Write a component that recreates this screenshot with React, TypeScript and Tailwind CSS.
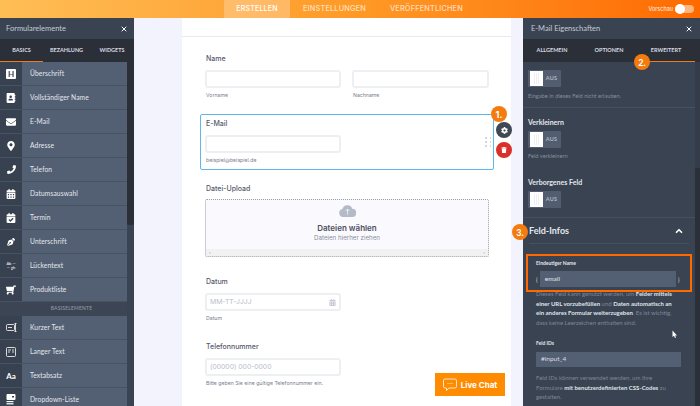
import { ChevronUp, X } from "lucide-react";
import {
  FaAddressBook,
  FaCalendarAlt,
  FaCalendarCheck,
  FaEnvelope,
  FaMapMarkerAlt,
  FaPenNib,
  FaPhoneAlt,
  FaShoppingCart,
  FaCog,
  FaTrash,
} from "react-icons/fa";

const H = () => (
  <span className="flex h-[10px] w-[10px] items-center justify-center rounded-[1px] bg-white text-[8px] leading-none font-bold text-[#39424f]">H</span>
);
const Blank = () => (
  <span className="flex flex-col items-center leading-none text-white">
    <span className="text-[4px]">Ab —</span>
    <span className="text-[4px]">— gh</span>
  </span>
);
const ShortText = () => (
  <svg width="11" height="9" viewBox="0 0 11 9" fill="none" stroke="white" strokeWidth="0.8">
    <rect x="0.5" y="1.5" width="8" height="6" rx="1" />
    <path d="M9.5 0.5v8M8.5 0.5h2M8.5 8.5h2" />
    <path d="M2 4.5h4" />
  </svg>
);
const LongText = () => (
  <svg width="10" height="10" viewBox="0 0 10 10" fill="none" stroke="white" strokeWidth="0.8">
    <rect x="0.5" y="0.5" width="9" height="9" rx="1" />
    <path d="M2 3h3M2 5h2M7 2v4" />
  </svg>
);
const Dropdown = () => (
  <svg width="10" height="11" viewBox="0 0 10 11" fill="white">
    <rect x="0.5" y="0" width="9" height="6" rx="1" />
    <rect x="0.5" y="7" width="7" height="1.2" />
    <rect x="0.5" y="9.2" width="7" height="1.2" />
    <rect x="6" y="2" width="2" height="1.5" fill="#39424f" />
  </svg>
);

const basics = [
  { name: "Überschrift", icon: <H /> },
  { name: "Vollständiger Name", icon: <FaAddressBook size={10} color="white" /> },
  { name: "E-Mail", icon: <FaEnvelope size={10} color="white" /> },
  { name: "Adresse", icon: <FaMapMarkerAlt size={10} color="white" /> },
  { name: "Telefon", icon: <FaPhoneAlt size={9} color="white" className="-scale-x-100" /> },
  { name: "Datumsauswahl", icon: <FaCalendarAlt size={10} color="white" /> },
  { name: "Termin", icon: <FaCalendarCheck size={10} color="white" /> },
  { name: "Unterschrift", icon: <FaPenNib size={8} color="white" /> },
  { name: "Lückentext", icon: <Blank /> },
  { name: "Produktliste", icon: <FaShoppingCart size={10} color="white" className="-scale-x-100" /> },
];
const base = [
  { name: "Kurzer Text", icon: <ShortText /> },
  { name: "Langer Text", icon: <LongText /> },
  { name: "Textabsatz", icon: <span className="text-[8px] font-bold text-white">Aa</span> },
  { name: "Dropdown-Liste", icon: <Dropdown /> },
];

function Row({ name, icon }: { name: string; icon: React.ReactNode }) {
  return (
    <div className="flex h-6 shrink-0 border-b border-[#475262]">
      <div className="flex w-[22px] shrink-0 items-center justify-center bg-[#38414f]">{icon}</div>
      <div className="flex flex-1 items-center bg-[#536073] pl-2 text-[6.7px] font-normal tracking-[0.1px] text-[#e3e7ee]">{name}</div>
    </div>
  );
}

function Badge({ n, className }: { n: string; className: string }) {
  return (
    <div className={`absolute z-10 flex h-4 w-4 items-center justify-center rounded-full bg-[#f47b0e] text-[9px] leading-none font-bold text-white ${className}`}>
      {n}
    </div>
  );
}

function Field({ label, sub, placeholder, icon }: { label: string; sub: string; placeholder?: string; icon?: boolean }) {
  return (
    <div className="flex flex-col">
      <div className="pl-px text-[7px] leading-[10px] font-medium text-[#57596a]">{label}</div>
      <div className="mt-[6px] flex h-[18px] w-[136px] items-center justify-between rounded-[3px] border-2 border-[#eeeff3] bg-white px-[3px] text-[6.8px] text-[#b9bdc9]">
        <span>{placeholder}</span>
        {icon && <FaCalendarAlt size={7} color="#c4c7d1" />}
      </div>
      <div className="mt-[4px] pl-px text-[5.2px] leading-[7px] text-[#7b7e8f]">{sub}</div>
    </div>
  );
}

function Toggle() {
  return (
    <div className="flex h-[17px] w-[33px] items-stretch rounded-[1px] bg-[#525e70] p-[1px] pl-[2px]">
      <div className="flex w-[13px] items-center justify-center gap-[1px] bg-white">
        <span className="h-[11px] w-px bg-[#eceef1]" />
        <span className="h-[11px] w-px bg-[#eceef1]" />
        <span className="h-[11px] w-px bg-[#eceef1]" />
      </div>
      <span className="flex-1 self-center text-center text-[5.5px] font-bold tracking-[0.3px] text-[#aeb6c3]">AUS</span>
    </div>
  );
}

export default function App() {
  return (
    <div className="relative flex h-[406px] w-[700px] flex-col overflow-hidden bg-[#f3f3fe] font-['Inter',sans-serif]">
      {/* top bar */}
      <div className="flex h-[18px] shrink-0 items-center bg-gradient-to-r from-[#ffbe55] via-[#ff9a26] to-[#ff6a00]">
        <div className="ml-[224px] flex h-full items-center">
          <div className="flex h-full w-[66px] items-center justify-center bg-white/25 text-[7px] font-medium tracking-[0.2px] text-white">ERSTELLEN</div>
          <div className="ml-[13px] text-[7.3px] font-medium tracking-[0.2px] text-white/70">EINSTELLUNGEN</div>
          <div className="ml-[24px] text-[7.3px] font-medium tracking-[0.2px] text-white/70">VERÖFFENTLICHEN</div>
        </div>
        <div className="ml-auto flex items-center pr-[6px]">
          <span className="mr-[2px] text-[5.5px] text-white/90">Vorschau</span>
          <div className="relative h-2 w-[19px] rounded-full bg-white/50">
            <div className="absolute top-[-1px] left-0 h-[10px] w-[10px] rounded-full bg-white" />
          </div>
        </div>
      </div>

      <div className="flex min-h-0 flex-1">
        {/* left panel */}
        <div className="flex w-[134px] shrink-0 flex-col bg-[#3a4351] font-['Lato',sans-serif]">
          <div className="flex h-[21px] shrink-0 items-center justify-between px-[6px] text-[7.5px] text-[#c5cbd5]">
            Formularelemente
            <X size={8} color="#fff" strokeWidth={3} />
          </div>
          <div className="flex h-[23px] shrink-0 items-center bg-[#2b2f38] text-[5.5px] font-bold text-[#d8dce3]">
            <div className="relative flex h-full w-[43px] items-center justify-center">
              BASICS
              <div className="absolute bottom-0 left-0 h-[1.5px] w-full bg-[#f07b1e]" />
            </div>
            <div className="flex h-full w-[47px] items-center justify-center">BEZAHLUNG</div>
            <div className="flex h-full w-[44px] items-center justify-center">WIDGETS</div>
          </div>
          <div className="flex min-h-0 flex-1">
            <div className="flex w-[127px] shrink-0 flex-col overflow-hidden">
              {basics.map((r) => (
                <Row key={r.name} {...r} />
              ))}
              <div className="flex h-[14px] shrink-0 items-center justify-center bg-[#3c4553] pl-[16px] text-[5px] font-semibold tracking-[0.2px] text-[#8e95a3]">
                BASISELEMENTE
              </div>
              {base.map((r) => (
                <Row key={r.name} {...r} />
              ))}
            </div>
            <div className="flex-1 bg-[#3a4351]">
              <div className="h-[163px] w-full rounded-b-[2px] bg-[#2b2f38]" />
            </div>
          </div>
        </div>

        {/* form canvas */}
        <div className="relative min-w-0 flex-1">
          <div className="ml-[48px] flex h-full w-[329px] flex-col bg-white">
            <div className="h-[19px] shrink-0 border-b border-[#e9eaf0]" />
            <div className="flex flex-col pt-[17px]">
              <div className="pl-[23px]">
                <div className="pl-px text-[7px] leading-[10px] font-medium text-[#57596a]">Name</div>
                <div className="mt-[6px] flex gap-[11px]">
                  <div className="w-[136px]">
                    <div className="h-[18px] rounded-[3px] border-2 border-[#eeeff3]" />
                    <div className="mt-[4px] pl-px text-[5.2px] leading-[7px] text-[#7b7e8f]">Vorname</div>
                  </div>
                  <div className="w-[137px]">
                    <div className="h-[18px] rounded-[3px] border-2 border-[#eeeff3]" />
                    <div className="mt-[4px] pl-px text-[5.2px] leading-[7px] text-[#7b7e8f]">Nachname</div>
                  </div>
                </div>
              </div>

              <div className="mt-[15px] ml-[18px] h-[56px] w-[294px] rounded-[2px] border border-[#5cb8ee] pt-[4px] pl-[4px]">
                <Field label="E-Mail" sub="beispiel@beispiel.de" />
              </div>

              <div className="mt-[14px] pl-[23px]">
                <div className="pl-px text-[7px] leading-[10px] font-medium text-[#57596a]">Datei-Upload</div>
                <div className="mt-[5px] flex h-[58px] w-[284px] flex-col rounded-[2px] border border-dotted border-[#9a9da8] bg-[#fafafe]">
                  <div className="flex flex-1 flex-col items-center">
                    <svg width="17" height="12" viewBox="0 0 17 12" className="mt-[5px]">
                      <path fill="#b4bac8" d="M4 12a4 4 0 0 1-.6-7.9A5.2 5.2 0 0 1 13.3 3.8 4.1 4.1 0 0 1 13 12z" />
                      <path fill="none" stroke="white" strokeWidth="0.7" d="M8.5 9.5V4M6.5 6l2-2 2 2" />
                    </svg>
                    <div className="mt-[6px] text-[8px] leading-[10px] font-semibold text-[#4c4f5e]">Dateien wählen</div>
                    <div className="mt-[1px] text-[6.2px] leading-[8px] text-[#8a8d9c]">Dateien hierher ziehen</div>
                  </div>
                  <div className="flex h-[7px] items-center justify-between bg-[#f1f1f1] px-[3px] text-[4px] text-[#888]">
                    <span>‹</span>
                    <span>›</span>
                  </div>
                </div>
              </div>

              <div className="mt-[20px] pl-[23px]">
                <Field label="Datum" sub="Datum" placeholder="MM-TT-JJJJ" icon />
              </div>
              <div className="mt-[20px] pl-[23px]">
                <Field label="Telefonnummer" sub="Bitte geben Sie eine gültige Telefonnummer ein." placeholder="(00000) 000-0000" />
              </div>
            </div>
          </div>

          {/* floating buttons on selected field */}
          <div className="absolute top-[104px] left-[362px] flex h-4 w-4 items-center justify-center rounded-full bg-[#3f4853]">
            <FaCog size={7} color="white" />
          </div>
          <div className="absolute top-[124px] left-[362px] flex h-4 w-4 items-center justify-center rounded-full bg-[#d9302a]">
            <FaTrash size={6} color="white" />
          </div>
          <div className="absolute top-[119px] left-[351px] grid grid-cols-2 gap-x-[3px] gap-y-[2.5px]">
            {[0, 1, 2, 3, 4, 5].map((i) => (
              <span key={i} className="h-[1.5px] w-[1.5px] bg-[#d5d8e0]" />
            ))}
          </div>
          <Badge n="1." className="top-[88px] left-[357px]" />

          <div className="absolute top-[355px] left-[301px] flex h-[23px] w-[70px] items-center justify-center gap-[4px] bg-[#ff8c00] text-[8px] font-bold text-white">
            <svg width="14" height="13" viewBox="0 0 14 13" fill="none" stroke="white" strokeWidth="0.8">
              <path d="M2 1h10a1.5 1.5 0 0 1 1.5 1.5v6A1.5 1.5 0 0 1 12 10H6l-2.5 2.5V10H2A1.5 1.5 0 0 1 .5 8.5v-6A1.5 1.5 0 0 1 2 1z" />
              <path d="M4.5 5.5h1M6.5 5.5h1M8.5 5.5h1" />
            </svg>
            Live Chat
          </div>
        </div>

        {/* right panel */}
        <div className="relative flex w-[177px] shrink-0 flex-col bg-[#3a4351] font-['Lato',sans-serif]">
          <div className="flex h-[21px] shrink-0 items-center justify-between pr-[7px] pl-[8px] text-[7.5px] text-[#c5cbd5]">
            E-Mail Eigenschaften
            <X size={8} color="#fff" strokeWidth={3} />
          </div>
          <div className="flex h-[23px] shrink-0 items-center bg-[#2b2f38] text-[5.5px] font-bold text-[#d8dce3]">
            <div className="flex h-full w-[58px] items-center justify-center">ALLGEMEIN</div>
            <div className="flex h-full w-[56px] items-center justify-center">OPTIONEN</div>
            <div className="relative flex h-full w-[58px] items-center justify-center">
              ERWEITERT
              <div className="absolute bottom-0 left-0 h-[1.5px] w-full bg-[#f07b1e]" />
            </div>
          </div>
          <div className="flex min-h-0 flex-1">
            <div className="flex w-[172px] shrink-0 flex-col overflow-hidden">
              <div className="border-b border-[#465060] pt-[8px] pb-[7px] pl-[5px]">
                <Toggle />
                <div className="mt-[5px] text-[5.7px] leading-[8px] text-[#848e9e]">Eingabe in dieses Feld nicht erlauben.</div>
              </div>
              <div className="pt-[10px] pl-[5px]">
                <div className="text-[7px] leading-[9px] font-bold text-[#e3e7ee]">Verkleinern</div>
                <div className="mt-[4px]"><Toggle /></div>
                <div className="mt-[4px] text-[5.7px] leading-[8px] text-[#848e9e]">Feld verkleinern</div>
              </div>
              <div className="border-b border-[#465060] pt-[18px] pb-[9px] pl-[5px]">
                <div className="text-[7px] leading-[9px] font-bold text-[#e3e7ee]">Verborgenes Feld</div>
                <div className="mt-[4px]"><Toggle /></div>
              </div>
              <div className="mx-[6px] flex h-[26px] shrink-0 items-center justify-between border-b border-[#465060] pr-[5px] text-[9px] font-bold text-[#e3e7ee]">
                Feld-Infos
                <ChevronUp size={10} color="white" strokeWidth={4} />
              </div>
              <div className="relative z-[1] mx-[3px] mt-[10px] h-[38px] shrink-0 border-2 border-[#ff6a00] bg-[#3a4351] pt-[3px] pl-[8px]">
                <div className="text-[5px] leading-[8px] font-bold text-[#e3e7ee]">Eindeutiger Name</div>
                <div className="mt-[4px] flex items-center gap-[2px] text-[6px] text-[#cfd4dc]">
                  {"{"}
                  <div className="flex h-[16px] w-[136px] items-center bg-[#536073] pl-[5px] text-[6.5px] text-[#e3e7ee]">email</div>
                  {"}"}
                </div>
              </div>
              <div className="mt-[-3px] pl-[13px] text-[6px] leading-[9.7px] whitespace-nowrap text-[#7d8798]">
                Dieses Feld kann genutzt werden, um <b className="text-[#dfe3ea]">Felder mittels</b>
                <br />
                <b className="text-[#dfe3ea]">einer URL vorzubefüllen</b> und <b className="text-[#dfe3ea]">Daten automatisch an</b>
                <br />
                <b className="text-[#dfe3ea]">ein anderes Formular weiterzugeben</b>. Es ist wichtig,
                <br />
                dass keine Leerzeichen enthalten sind.
              </div>
              <div className="mt-[11px] pl-[13px] text-[5px] leading-[8px] font-bold text-[#e3e7ee]">Feld IDs</div>
              <div className="mt-[5px] ml-[13px] flex h-[15px] w-[145px] shrink-0 items-center bg-[#536073] pl-[5px] text-[6.5px] text-[#d8dce3]">#input_4</div>
              <div className="mt-[6px] pl-[13px] text-[6px] leading-[9.7px] whitespace-nowrap text-[#7d8798]">
                Feld IDs können verwendet werden, um Ihre
                <br />
                Formulare <b className="text-[#dfe3ea]">mit benutzerdefinierten CSS-Codes</b> zu
                <br />
                gestalten.
              </div>
            </div>
            <div className="flex flex-1 flex-col justify-end bg-[#343c49]">
              <div className="h-[238px] bg-[#2b2f38]" />
            </div>
          </div>
          <Badge n="2." className="top-[36px] left-[111px]" />
          <Badge n="3." className="top-[206px] left-[-11px]" />
          <svg className="absolute top-[312px] left-[149px] z-10" width="6" height="9" viewBox="0 0 6 9" fill="white">
            <path d="M0.5 0.5v6.5l1.5-1.3 1 2.3 1-.4-1-2.2h2z" />
          </svg>
        </div>
      </div>
    </div>
  );
}
